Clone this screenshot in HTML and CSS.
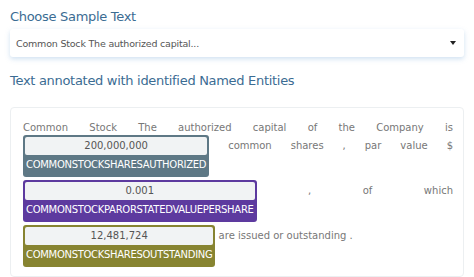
FILE: index.html
```html
<!DOCTYPE html>
<html>
<head>
   <title>Named Entity Recognition</title>
   <link rel="stylesheet" href="styles.css">
</head>
<body>
<div class="page">
   <h2 class="title">Choose Sample Text</h2>
   <div class="select">
      <span class="select-text">Common Stock The authorized capital...</span>
      <span class="caret"></span>
   </div>
   <h2 class="title title-ner">Text annotated with identified Named Entities</h2>
   <div class="card">
      <p class="doc">Common Stock The authorized capital of the Company is
         <span class="ent ent-auth"><span class="val">200,000,000</span><span class="tag">COMMONSTOCKSHARESAUTHORIZED</span></span>
         common shares , par value $
         <span class="ent ent-par"><span class="val">0.001</span><span class="tag">COMMONSTOCKPARORSTATEDVALUEPERSHARE</span></span>
         , of which
         <span class="ent ent-out"><span class="val">12,481,724</span><span class="tag">COMMONSTOCKSHARESOUTSTANDING</span></span>
         are issued or outstanding .</p>
   </div>
</div>
</body>
</html>
```

FILE: styles.css
```css
body {
      margin: 0;
      font-family: "DejaVu Sans", Arial, sans-serif;
      background: #fff;
    }
    .page {
      padding: 8px 10px 0 10px;
    }

.title {
      margin: 0 0 3px 0;
      font-size: 13px;
      line-height: 18px;
      font-weight: normal;
      color: #3b6c93;
      letter-spacing: -0.3px;
}

.title-ner {
      margin-top: 15px;
      margin-bottom: 17px;
}

.select {
      display: flex;
      align-items: center;
      justify-content: space-between;
      height: 28px;
      padding: 0 8px 0 6px;
      background: #fff;
      border-radius: 3px;
      box-shadow: 0 2px 5px rgba(120, 170, 215, 0.35);
}

.select-text {
      font-size: 9.5px;
      letter-spacing: -0.2px;
      color: #555;
}

.caret {
      width: 0;
      height: 0;
      border-left: 3px solid transparent;
      border-right: 3px solid transparent;
      border-top: 4px solid #222;
}

.card {
      border: 1px solid #eceff1;
      border-radius: 4px;
      padding: 13px 10px 6px 12px;
}

.doc {
      margin: 0;
      font-size: 10px;
      line-height: 14px;
      color: #777;
      text-align: justify;
}

.ent {
      display: inline-flex;
      flex-direction: column;
      margin: 0 0 3px 0;
      padding: 2px;
      border-radius: 3px;
      vertical-align: baseline;
}

.val {
      background: #f1f3f4;
      border-radius: 2px;
      text-align: center;
      line-height: 18px;
      color: #555;
}

.tag {
      color: #fff;
      line-height: 20px;
      padding: 0 1px;
      letter-spacing: -0.3px;
}

.ent-auth {
      background: #5e7885;
}

.ent-par {
      background: #5d3a9f;
}

.ent-out {
      background: #878431;
}
```
